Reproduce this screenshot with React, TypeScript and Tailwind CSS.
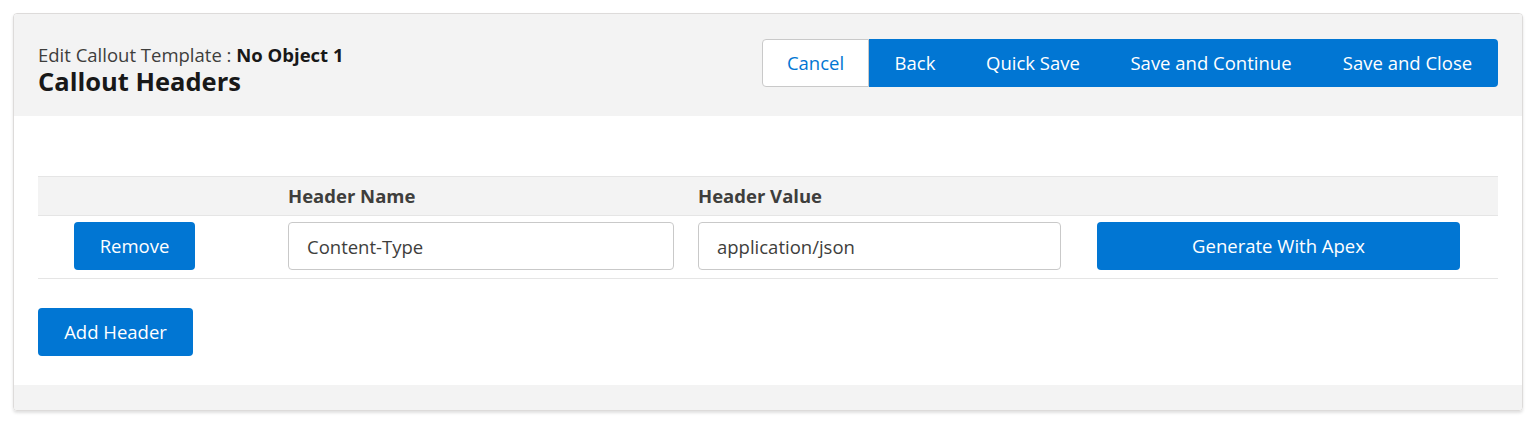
import React from "react";

const font = { fontFamily: '"Open Sans", "Noto Sans", sans-serif' };

const App = () => {
  return (
    <div className="min-h-[428px] bg-white pt-[13px] px-[13px]" style={font}>
      <div className="w-[1510px] rounded border border-[#dddbda] shadow-[0_2px_3px_rgba(0,0,0,0.12)] overflow-hidden">
        {/* header */}
        <div className="h-[102px] bg-[#f3f3f3] flex items-start justify-between pl-[24px] pr-[24px] pt-[25px]">
          <div className="pt-[4px]">
            <div className="text-[18.5px] leading-[23px] text-[#3e3e3c]">
              Edit Callout Template : <span className="font-bold text-[#181818]">No Object 1</span>
            </div>
            <h1 className="text-[25.5px] leading-[31px] font-bold text-[#181818]">Callout Headers</h1>
          </div>
          <div className="flex h-[48px] text-[18.5px]">
            <button className="w-[107px] bg-white border border-[#c9c9c9] rounded-l text-[#0176d3]">Cancel</button>
            <div className="flex bg-[#0176d3] rounded-r text-white">
              <button className="w-[92px]">Back</button>
              <button className="w-[144px]">Quick Save</button>
              <button className="w-[212px]">Save and Continue</button>
              <button className="w-[181px]">Save and Close</button>
            </div>
          </div>
        </div>

        {/* body */}
        <div className="bg-white h-[269px] px-[24px] pt-[60px]">
          <div className="flex h-[39px] bg-[#f3f3f3] border-t border-[#e5e5e5] items-center text-[18.5px] font-bold text-[#3e3e3c]">
            <div className="w-[238px]" />
            <div className="w-[410px] pl-[12px]">Header Name</div>
            <div className="w-[399px] pl-[12px]">Header Value</div>
          </div>
          <div className="flex h-[64px] items-start pt-[6px] border-t border-b border-[#e5e5e5]">
            <div className="w-[238px] pl-[36px]">
              <button className="w-[121px] h-[48px] rounded bg-[#0176d3] text-white text-[18.5px]">Remove</button>
            </div>
            <div className="w-[410px] pl-[12px]">
              <input
                defaultValue="Content-Type"
                className="w-[386px] h-[48px] rounded border border-[#c9c9c9] px-[18px] text-[18.5px] text-[#3e3e3c] outline-none"
              />
            </div>
            <div className="w-[399px] pl-[12px]">
              <input
                defaultValue="application/json"
                className="w-[363px] h-[48px] rounded border border-[#c9c9c9] px-[18px] text-[18.5px] text-[#3e3e3c] outline-none"
              />
            </div>
            <div className="pl-[12px]">
              <button className="w-[363px] h-[48px] rounded bg-[#0176d3] text-white text-[18.5px]">Generate With Apex</button>
            </div>
          </div>
          <button className="mt-[29px] w-[155px] h-[48px] rounded bg-[#0176d3] text-white text-[18.5px]">Add Header</button>
        </div>

        {/* footer */}
        <div className="h-[25px] bg-[#f3f3f3]" />
      </div>
    </div>
  );
};

export default App;
